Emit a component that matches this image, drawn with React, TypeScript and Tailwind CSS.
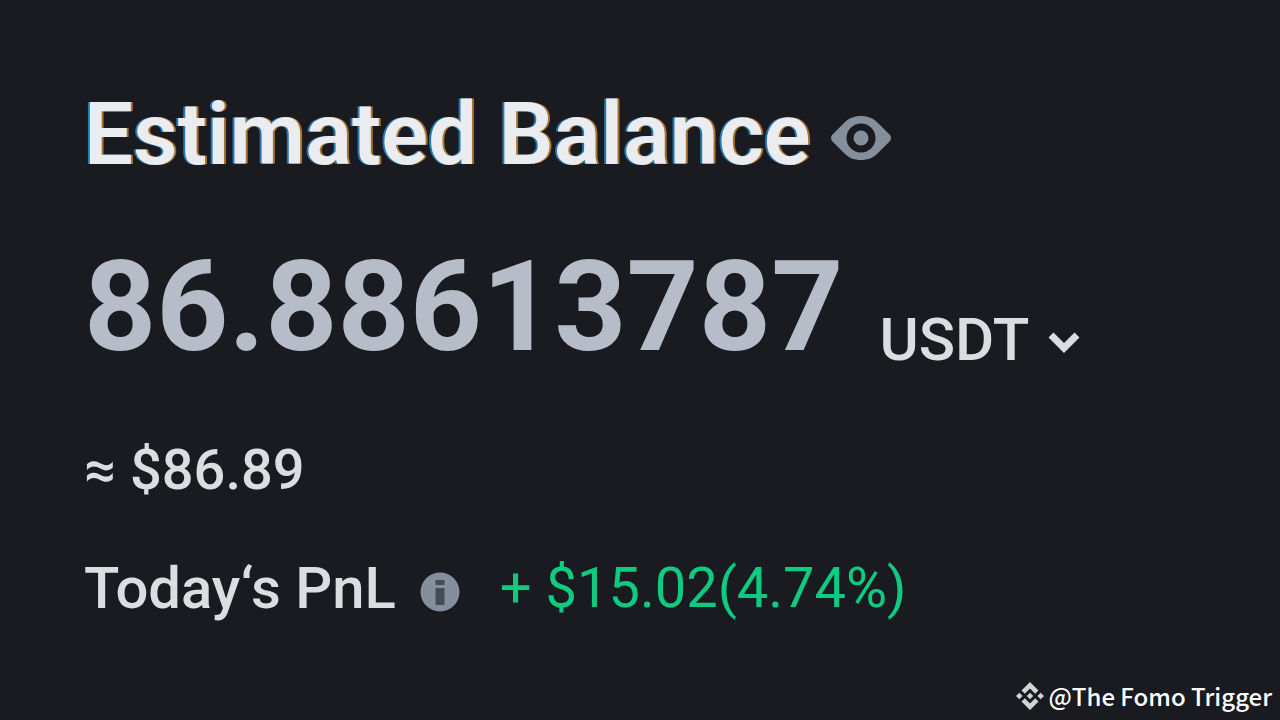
import React, { useState } from "react";

function EyeIcon() {
  return (
    <svg viewBox="0 0 60 46" className="w-[60px] h-[46px]" fill="#848e9c" aria-hidden="true">
      <path
        fillRule="evenodd"
        d="M30 1C23 1 18 3 13 8L1 20Q-1 23 1 26L13 38c5 5 10 7 17 7s12-2 17-7l12-12Q61 23 59 20L47 8C42 3 37 1 30 1Zm0 7.500a14.500 14.500 0 1 1 0 29 14.500 14.500 0 0 1 0-29Z"
      />
      <circle cx="30" cy="23" r="7.500" />
    </svg>
  );
}

function InfoIcon() {
  return (
    <svg viewBox="0 0 40 40" className="w-10 h-10" aria-hidden="true">
      <circle cx="20" cy="20" r="19.500" fill="#848e9c" />
      <path d="M15.500 8h9v5h-9zM15.500 16h9v17h-9z" fill="#454b55" />
    </svg>
  );
}

function BinanceLogo() {
  return (
    <svg viewBox="0 0 28 28" className="w-7 h-7" fill="#d4d4d6" aria-hidden="true">
      <path d="M14 0l8.500 8.500-3.300 3.300L14 6.600l-5.200 5.200-3.300-3.300z" />
      <path d="M14 28l8.500-8.500-3.300-3.300L14 21.400l-5.200-5.200-3.300 3.300z" />
      <path d="M14 10.700l3.300 3.300-3.300 3.300-3.300-3.300zM3.300 10.700L6.600 14l-3.300 3.300L0 14zM24.700 10.700L28 14l-3.300 3.300-3.300-3.300z" />
    </svg>
  );
}

export default function App() {
  const [hidden, setHidden] = useState(false);
  const [currency, setCurrency] = useState("USDT");

  const mask = (value: string) => (hidden ? "******" : value);

  return (
    <div className="min-h-screen flex flex-col bg-[#1a1b20] text-[#dcdde0] font-['Roboto',sans-serif]">
      <main className="px-[84px] pt-[86px] whitespace-nowrap">
        <div className="flex items-center gap-5">
          <h1 className="text-[87px] leading-[96px] font-semibold text-[#eaecef] [text-shadow:-2px_0_#2278b0,2px_0_#a8722a]">
            Estimated Balance
          </h1>
          <button
            type="button"
            onClick={() => setHidden(!hidden)}
            aria-label={hidden ? "Show balance" : "Hide balance"}
            className="mt-2 cursor-pointer"
          >
            <EyeIcon />
          </button>
        </div>

        <div className="flex items-end gap-9 mt-10">
          <p className="text-[126px] leading-[170px] font-bold text-[#b7bdc8]">{mask("86.88613787")}</p>
          <div className="relative pb-[18px]">
            <select
              aria-label="Currency"
              value={currency}
              onChange={(e) => setCurrency(e.target.value)}
              className="block appearance-none bg-transparent pr-[52px] text-[60px] leading-[68px] font-medium focus:outline-none"
            >
              <option>USDT</option>
              <option>BTC</option>
            </select>
            <svg
              viewBox="0 0 34 24"
              className="absolute right-0 top-6 w-[34px] h-6 pointer-events-none"
              aria-hidden="true"
            >
              <path d="M4 5l13 13L30 5" fill="none" stroke="#dcdde0" strokeWidth="7" />
            </svg>
          </div>
        </div>

        <p className="mt-11 text-[56px] leading-[68px] font-medium">≈ {mask("$86.89")}</p>

        <div className="flex items-center mt-[50px] text-[58px] leading-[68px]">
          <span className="font-medium">Today‘s PnL</span>
          <button type="button" aria-label="About today's PnL" className="ml-6 mr-10 pt-2 cursor-pointer">
            <InfoIcon />
          </button>
          <span className="text-[56px] text-[#0ecb81]">+ {mask("$15.02(4.74%)")}</span>
        </div>
      </main>

      <footer className="mt-auto flex items-center justify-end gap-1 pr-2 pb-2 text-[24px] leading-8 font-medium text-white font-['Noto_Sans_CJK_SC',sans-serif]">
        <BinanceLogo />
        <span>@The Fomo Trigger</span>
      </footer>
    </div>
  );
}
